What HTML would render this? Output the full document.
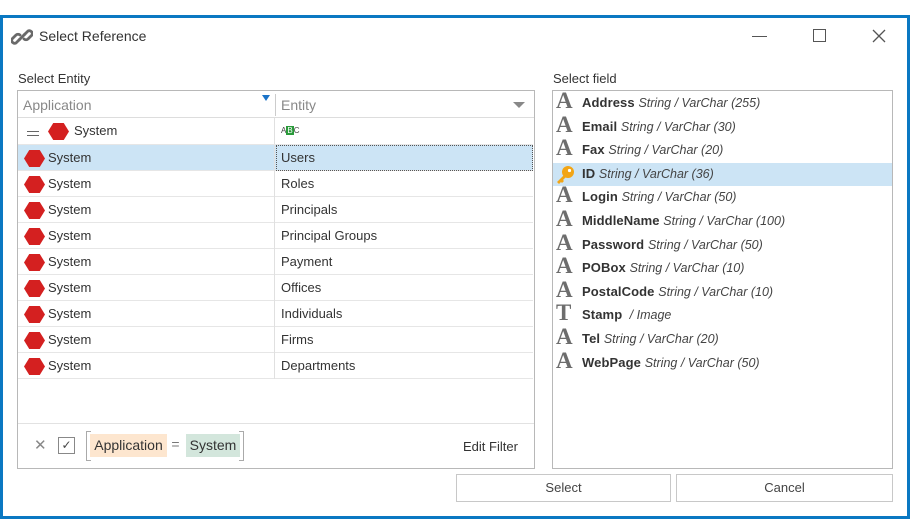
<!DOCTYPE html>
<html><head><style>
*{margin:0;padding:0;box-sizing:border-box}
body{width:910px;height:519px;background:#fff;position:relative;overflow:hidden;font-family:"Liberation Sans",sans-serif;font-size:13px;color:#333}
.a{position:absolute}
.frame{left:0;top:15px;width:910px;height:504px;border:3px solid #0a78c2;border-bottom-width:3px}
.row{position:absolute;left:18px;width:515px;height:26px;border-bottom:1px solid #e6e6e6}
.row .c1{position:absolute;left:0;top:0;width:257px;height:26px;border-right:1px solid #e0e0e0}
.row .t1{position:absolute;left:30px;top:5px}
.row .t2{position:absolute;left:263px;top:5px}
.hex{position:absolute;left:6px;top:5px;width:21px;height:17px;background:#d42020;clip-path:polygon(25% 0,75% 0,100% 50%,75% 100%,25% 100%,0 50%)}
.f{position:absolute;left:0;height:23.6px;width:339px;white-space:nowrap}
.f .ic{position:absolute;left:3px;top:-4px;font:bold 23px "Liberation Serif",serif;color:#6d6d6d}
.f .n{position:absolute;left:29px;top:3px;font-weight:bold;font-size:13px;color:#333;letter-spacing:.1px}
.f i{font-size:12.5px;color:#444;font-weight:normal;letter-spacing:0}
.btn{position:absolute;top:474px;height:28px;border:1px solid #c8c8c8;background:#fff;text-align:center;line-height:26px;color:#444;font-size:13px}
</style></head><body>
<div class="a frame"></div>
<svg class="a" style="left:11px;top:26px" width="22" height="22" viewBox="0 0 22 22"><g fill="none" stroke="#6a6a6a" stroke-width="2.8" stroke-linecap="round"><path d="M9 13 L5 17 a3 3 0 0 1 -4 -4 l4 -4 a3 3 0 0 1 4 0"/><path d="M13 9 L17 5 a3 3 0 0 1 4 4 l-4 4 a3 3 0 0 1 -4 0"/><path d="M8 14 L14 8"/></g></svg>
<div class="a" style="left:39px;top:28px;font-size:14px;color:#333">Select Reference</div>
<div class="a" style="left:752px;top:36px;width:15px;height:1px;background:#555"></div>
<div class="a" style="left:813px;top:29px;width:13px;height:13px;border:1px solid #555"></div>
<svg class="a" style="left:872px;top:29px" width="14" height="14"><path d="M1 1L13 13M13 1L1 13" stroke="#555" stroke-width="1.3"/></svg>
<div class="a" style="left:18px;top:71px;font-size:13px">Select Entity</div>
<div class="a" style="left:553px;top:71px;font-size:13px">Select field</div>
<div class="a" style="left:17px;top:90px;width:518px;height:379px;border:1px solid #b8b8b8"></div>
<div class="a" style="left:18px;top:91px;width:516px;height:27px;border-bottom:1px solid #ddd"></div>
<div class="a" style="left:275px;top:94px;width:1px;height:22px;background:#ccc"></div>
<div class="a" style="left:23px;top:97px;color:#888;font-size:14px">Application</div>
<div class="a" style="left:281px;top:97px;color:#888;font-size:14px">Entity</div>
<div class="a" style="left:262px;top:95px;width:0;height:0;border-left:4px solid transparent;border-right:4px solid transparent;border-top:6px solid #1a73c8"></div>
<div class="a" style="left:513px;top:102px;width:0;height:0;border-left:6px solid transparent;border-right:6px solid transparent;border-top:6px solid #888"></div>
<div class="row" style="top:118px;height:27px"><div class="c1"></div><div class="a" style="left:9px;top:13px;width:12px;height:5px;border-top:1px solid #666;border-bottom:1px solid #666"></div><div class="hex" style="left:30px"></div><div class="t1" style="left:56px">System</div><div class="a" style="left:263px;top:8px;font-size:8px;color:#444">A<span style="background:#2a9a3a;color:#fff;padding:0 1px">B</span>C</div></div>
<div class="row" style="top:145px;background:#cce4f5"><div class="c1"></div><div class="hex"></div><div class="t1">System</div><div class="a" style="left:258px;top:0;width:257px;height:26px;border:1px dotted #555"></div><div class="t2">Users</div></div>
<div class="row" style="top:171px"><div class="c1"></div><div class="hex"></div><div class="t1">System</div><div class="t2">Roles</div></div>
<div class="row" style="top:197px"><div class="c1"></div><div class="hex"></div><div class="t1">System</div><div class="t2">Principals</div></div>
<div class="row" style="top:223px"><div class="c1"></div><div class="hex"></div><div class="t1">System</div><div class="t2">Principal Groups</div></div>
<div class="row" style="top:249px"><div class="c1"></div><div class="hex"></div><div class="t1">System</div><div class="t2">Payment</div></div>
<div class="row" style="top:275px"><div class="c1"></div><div class="hex"></div><div class="t1">System</div><div class="t2">Offices</div></div>
<div class="row" style="top:301px"><div class="c1"></div><div class="hex"></div><div class="t1">System</div><div class="t2">Individuals</div></div>
<div class="row" style="top:327px"><div class="c1"></div><div class="hex"></div><div class="t1">System</div><div class="t2">Firms</div></div>
<div class="row" style="top:353px"><div class="c1"></div><div class="hex"></div><div class="t1">System</div><div class="t2">Departments</div></div>
<div class="a" style="left:18px;top:423px;width:516px;height:1px;background:#e2e2e2"></div>
<div class="a" style="left:34px;top:436px;color:#888;font-size:15px">✕</div>
<div class="a" style="left:58px;top:437px;width:17px;height:17px;border:1px solid #888;font-size:12px;text-align:center;line-height:15px;color:#444">✓</div>
<div class="a" style="left:86px;top:431px;width:5px;height:30px;border:1px solid #aaa;border-right:none"></div>
<div class="a" style="left:90px;top:434px;width:77px;height:23px;background:#fde6cf;text-align:center;line-height:23px;font-size:14px">Application</div>
<div class="a" style="left:168px;top:436px;width:15px;font-size:14px;color:#777;text-align:center">=</div>
<div class="a" style="left:186px;top:434px;width:54px;height:23px;background:#d3e6dc;text-align:center;line-height:23px;font-size:14px">System</div>
<div class="a" style="left:239px;top:431px;width:5px;height:30px;border:1px solid #aaa;border-left:none"></div>
<div class="a" style="left:463px;top:439px;font-size:13px">Edit Filter</div>
<div class="a" style="left:552px;top:90px;width:341px;height:379px;border:1px solid #b8b8b8">
<div class="f" style="top:1px"><span class="ic">A</span><span class="n">Address <i>String / VarChar (255)</i></span></div>
<div class="f" style="top:24.6px"><span class="ic">A</span><span class="n">Email <i>String / VarChar (30)</i></span></div>
<div class="f" style="top:48.2px"><span class="ic">A</span><span class="n">Fax <i>String / VarChar (20)</i></span></div>
<div class="f" style="top:71.8px;background:#cce4f5"><svg class="a" style="left:2px;top:2px" width="20" height="20" viewBox="0 0 20 20"><circle cx="13" cy="7" r="6" fill="#f2a516"/><path d="M9 10 L2 17 L4 19 L6 17 L7 18 L9 16 L8 15 L12 11Z" fill="#f2a516"/><circle cx="14.5" cy="5.5" r="1.6" fill="#fff"/></svg><span class="n">ID <i>String / VarChar (36)</i></span></div>
<div class="f" style="top:95.4px"><span class="ic">A</span><span class="n">Login <i>String / VarChar (50)</i></span></div>
<div class="f" style="top:119px"><span class="ic">A</span><span class="n">MiddleName <i>String / VarChar (100)</i></span></div>
<div class="f" style="top:142.6px"><span class="ic">A</span><span class="n">Password <i>String / VarChar (50)</i></span></div>
<div class="f" style="top:166.2px"><span class="ic">A</span><span class="n">POBox <i>String / VarChar (10)</i></span></div>
<div class="f" style="top:189.8px"><span class="ic">A</span><span class="n">PostalCode <i>String / VarChar (10)</i></span></div>
<div class="f" style="top:213.4px"><span class="ic">T</span><span class="n">Stamp &nbsp;<i>/ Image</i></span></div>
<div class="f" style="top:237px"><span class="ic">A</span><span class="n">Tel <i>String / VarChar (20)</i></span></div>
<div class="f" style="top:260.6px"><span class="ic">A</span><span class="n">WebPage <i>String / VarChar (50)</i></span></div>
</div>
<div class="btn" style="left:456px;width:215px">Select</div>
<div class="btn" style="left:676px;width:217px">Cancel</div>
</body></html>
